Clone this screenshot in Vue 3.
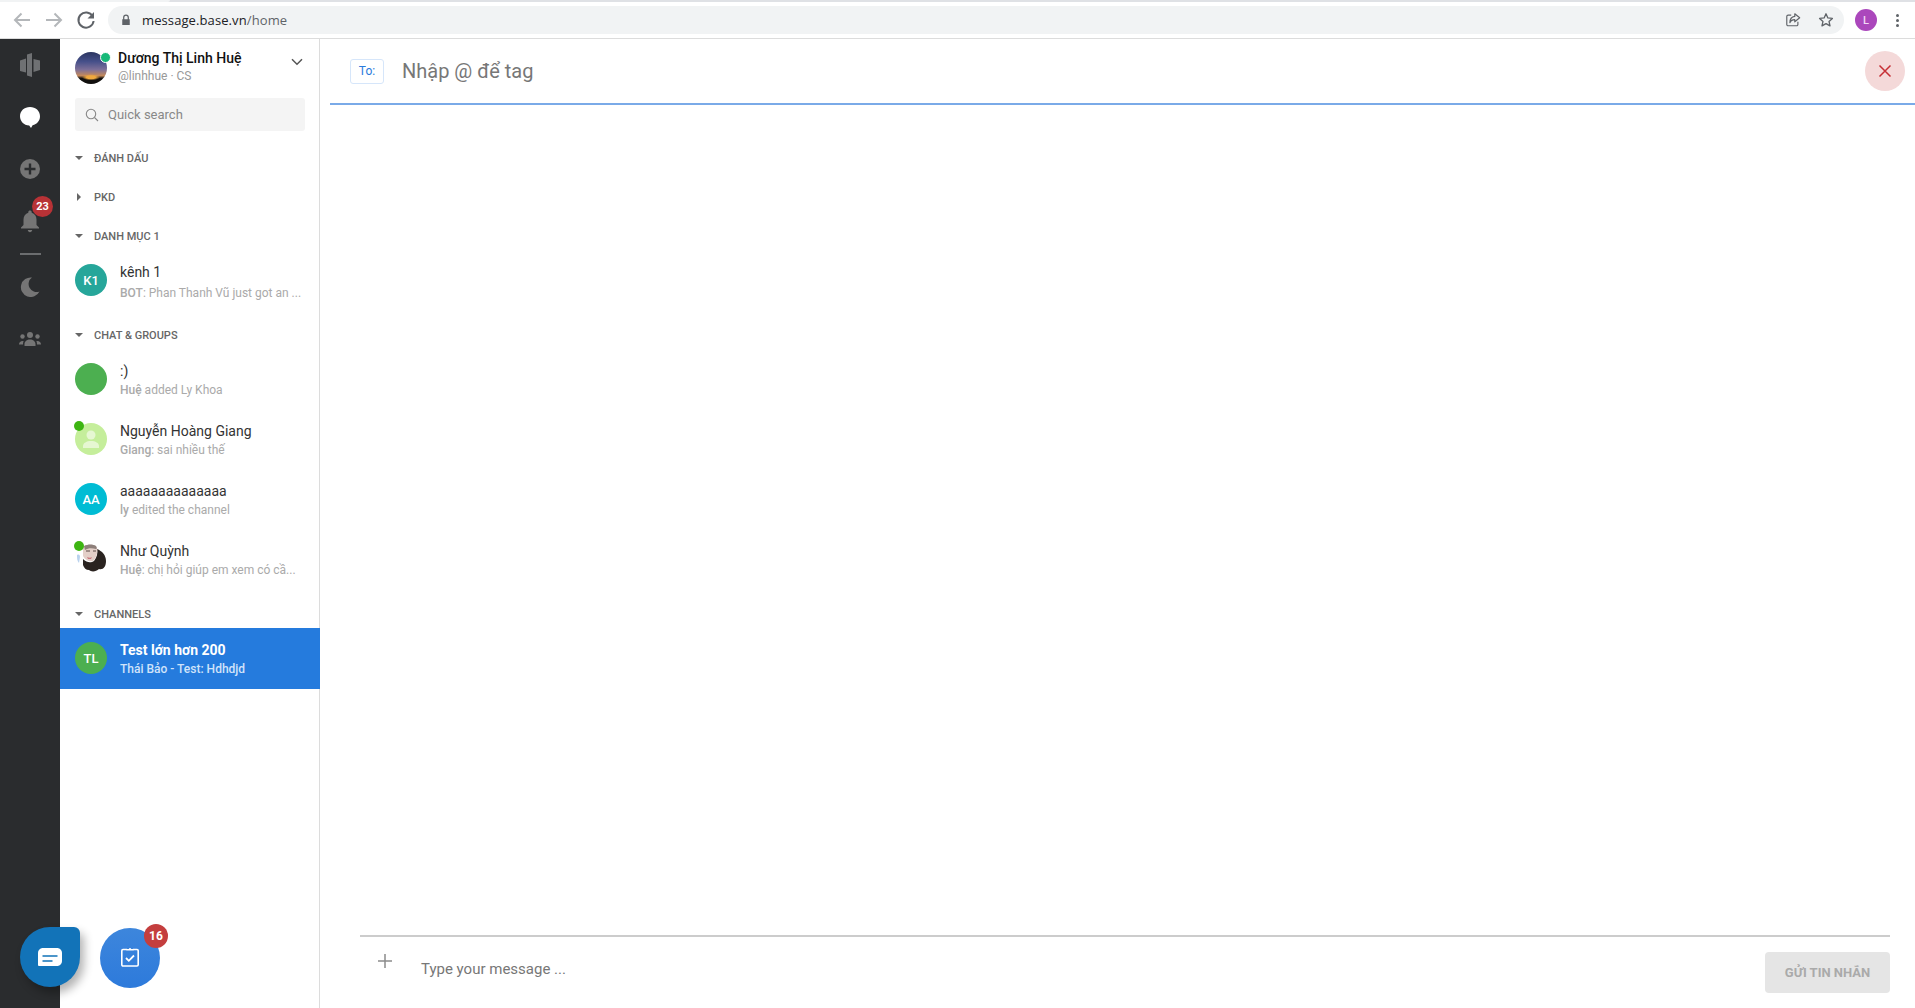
<script setup>
const sections = [
  { title: 'ĐÁNH DẤU', open: true, rows: [] },
  { title: 'PKD', open: false, rows: [] },
  { title: 'DANH MỤC 1', open: true, rows: [
    { name: 'kênh 1', from: 'BOT', text: ': Phan Thanh Vũ just got an ...', initials: 'K1', color: '#26a69a', loose: true },
  ] },
  { title: 'CHAT & GROUPS', open: true, rows: [
    { name: ':)', from: 'Huệ', text: ' added Ly Khoa', initials: '', color: '#4caf50' },
    { name: 'Nguyễn Hoàng Giang', from: 'Giang', text: ': sai nhiều thế', kind: 'person', color: '#c5ee9b', online: true },
    { name: 'aaaaaaaaaaaaaa', from: 'ly', text: ' edited the channel', initials: 'AA', color: '#00bcd4' },
    { name: 'Như Quỳnh', from: 'Huệ', text: ': chị hỏi giúp em xem có cầ...', kind: 'photo', color: '#fff', online: true },
  ] },
  { title: 'CHANNELS', open: true, rows: [
    { name: 'Test lớn hơn 200', from: 'Thái Bảo - Test', text: ': Hdhdjd', initials: 'TL', color: '#4caf50', active: true },
  ] },
]
</script>

<template>
  <div class="page">
    <header class="browser">
      <div class="tabstrip"><span class="tabrest"></span></div>
      <div class="toolbar">
        <svg class="nav" viewBox="0 0 24 24"><path d="M20 12H5M11.500 5.500 5 12l6.500 6.500" fill="none" stroke="#b4b7ba" stroke-width="2"/></svg>
        <svg class="nav" viewBox="0 0 24 24"><path d="M4 12h15M12.500 5.500 19 12l-6.500 6.500" fill="none" stroke="#b4b7ba" stroke-width="2"/></svg>
        <svg class="nav" viewBox="0 0 24 24"><path d="M18.600 8.200A7.600 7.600 0 1 0 19.600 13" fill="none" stroke="#5f6368" stroke-width="2"/><path d="M20 4v6.500h-6.500z" fill="#5f6368"/></svg>
        <div class="omnibox">
          <svg class="lock" viewBox="0 0 12 14"><path d="M2.500 6V4a3.500 3.500 0 0 1 7 0v2h1v7h-9V6zM4 6h4V4a2 2 0 0 0-4 0z" fill="#5f6368"/></svg>
          <span class="url"><b>message.base.vn</b>/home</span>
          <span class="grow"></span>
          <svg class="omni-icon" viewBox="0 0 18 18"><path d="M7 3.500H3.500a1.500 1.500 0 0 0-1.500 1.500v9a1.500 1.500 0 0 0 1.500 1.500h9.500a1.500 1.500 0 0 0 1.500-1.500v-3" fill="none" stroke="#5f6368" stroke-width="1.300"/><path d="M11 2l5.500 4.500L11 11V8.500C8.500 8.500 6.500 9.500 5.500 12c0-4 2-6.500 5.500-7z" fill="none" stroke="#5f6368" stroke-width="1.300" stroke-linejoin="round"/></svg>
          <svg class="omni-icon star" viewBox="0 0 18 18"><path d="M9 2l2.100 4.700 5.100.5-3.800 3.400 1.100 5L9 13l-4.500 2.600 1.100-5L1.800 7.200l5.100-.5z" fill="none" stroke="#5f6368" stroke-width="1.500" stroke-linejoin="round"/></svg>
        </div>
        <span class="profile">L</span>
        <span class="kebab"><i></i><i></i><i></i></span>
      </div>
    </header>

    <div class="shell">
      <nav class="rail">
        <div class="rail-item">
          <svg width="20" height="24" viewBox="0 0 20 24"><path d="M0 7.500L6 5.500V19.500L0 18zM7 1.500L12 0V24L7 22.500zM13.500 6L20 7.500V17L13.500 19z" fill="#6f7173"/></svg>
        </div>
        <div class="rail-item">
          <svg width="24" height="24" viewBox="0 0 24 24"><path d="M12 2c5.700 0 10 3.900 10 9.200 0 4.600-3 8-7.400 9l-1.600 2.800-1.800-2.600C5.800 20.200 2 16.300 2 11.200 2 5.900 6.300 2 12 2z" fill="#fff"/></svg>
        </div>
        <div class="rail-item">
          <svg width="22" height="22" viewBox="0 0 22 22"><circle cx="11" cy="11" r="10" fill="#757575"/><path d="M11 5.500v11M5.500 11h11" stroke="#2a2c2e" stroke-width="2.400"/></svg>
        </div>
        <div class="rail-item bell">
          <svg width="20" height="24" viewBox="0 0 20 24"><path d="M10 1.500c1 0 1.700.7 1.700 1.700v.6c3 .8 4.800 3.400 4.800 6.700v5.500l2.500 2.500v.9H1v-.9l2.500-2.500v-5.500c0-3.300 1.800-5.900 4.800-6.700v-.6c0-1 .7-1.700 1.700-1.700zM7.800 21h4.400c0 1.200-1 2.200-2.200 2.200S7.800 22.200 7.800 21z" fill="#757575"/></svg>
          <span class="badge rail-badge">23</span>
        </div>
        <div class="rail-divider"></div>
        <div class="rail-item">
          <svg width="20" height="20" viewBox="0 0 20 20"><path d="M12 .5A9.800 9.800 0 1 0 19.500 14.500 8 8 0 0 1 12 .5z" fill="#757575"/></svg>
        </div>
        <div class="rail-item">
          <svg width="22" height="14" viewBox="0 0 22 14"><circle cx="11" cy="3" r="3" fill="#757575"/><circle cx="3.500" cy="4.500" r="2.200" fill="#757575"/><circle cx="18.500" cy="4.500" r="2.200" fill="#757575"/><path d="M5.500 14v-2c0-2.700 2.500-4.500 5.500-4.500s5.500 1.800 5.500 4.500v2zM0 12.500c0-2 1.500-3.500 3.800-3.500.5 0 .7 0 .8.100-.4.900-.6 2-.6 3.400zM22 12.500c0-2-1.500-3.500-3.800-3.500-.5 0-.7 0-.8.100.4.900.6 2 .6 3.400z" fill="#757575"/></svg>
        </div>
      </nav>

      <aside class="sidebar">
        <div class="me">
          <div class="me-avatar">
            <span class="sky"></span>
            <span class="dot me-dot"></span>
          </div>
          <div class="me-text">
            <div class="me-name">Dương Thị Linh Huệ</div>
            <div class="me-sub">@linhhue · CS</div>
          </div>
          <svg class="chev" width="12" height="8" viewBox="0 0 12 8"><path d="M1 1.200l5 5 5-5" fill="none" stroke="#555" stroke-width="1.500"/></svg>
        </div>
        <div class="search">
          <svg width="14" height="14" viewBox="0 0 14 14"><circle cx="6" cy="6" r="4.700" fill="none" stroke="#888" stroke-width="1.100"/><path d="M9.500 9.500L13 13" stroke="#888" stroke-width="1.100"/></svg>
          <span>Quick search</span>
        </div>

        <div class="sections">
          <section v-for="s in sections" :key="s.title" class="section">
            <div class="section-head">
              <span class="caret-box"><span :class="s.open ? 'caret-down' : 'caret-right'"></span></span>
              <span>{{ s.title }}</span>
            </div>
            <div v-for="r in s.rows" :key="r.name" class="row" :class="{ active: r.active, loose: r.loose }">
              <div class="avatar" :style="{ background: r.color }">
                <template v-if="r.initials">{{ r.initials }}</template>
                <svg v-else-if="r.kind === 'person'" width="20" height="18" viewBox="0 0 20 18"><circle cx="10" cy="5" r="4.500" fill="#e6f7d2"/><path d="M2 18v-2c0-3 3.600-5 8-5s8 2 8 5v2z" fill="#e6f7d2"/></svg>
                <svg v-else-if="r.kind === 'photo'" class="photo" viewBox="0 0 32 32">
                  <path d="M8 16c4 4 8 4 11 2 3-4 4-8 3-12 5 2 9 6 9 12 0 6-3 9-7 8-3 3-8 3-10 1-3 0-5-2-6-5z" fill="#2a2320"/>
                  <path d="M8 4c4-3 11-3 14 1 1 5-1 10-4 13-4 1-8-1-10-5z" fill="#e3cfc8"/>
                  <path d="M9 3c4-2 9-2 12 0 1 1 1 3 0 3-4-1-8-1-11 1z" fill="#8d7f7a"/>
                  <path d="M12 14c2 1 4 1 5 0l-1 2h-3z" fill="#c9777e"/>
                  <path d="M11 8h4M18 8h3" stroke="#5a4a46" stroke-width="1"/>
                  <path d="M2 12c2-1 3 0 3 2l-1 6c-2-2-2-5-2-8z" fill="#b9d2ee"/>
                </svg>
                <span v-if="r.online" class="dot row-dot"></span>
              </div>
              <div class="row-text">
                <div class="row-name">{{ r.name }}</div>
                <div class="row-sub"><b>{{ r.from }}</b>{{ r.text }}</div>
              </div>
            </div>
          </section>
        </div>
      </aside>

      <main class="main">
        <div class="to-bar">
          <span class="to">To:</span>
          <span class="to-input">Nhập @ để tag</span>
          <span class="grow"></span>
          <button class="close">
            <svg width="14" height="14" viewBox="0 0 14 14"><path d="M1.500 1.500l11 11M12.500 1.500l-11 11" stroke="#c62f35" stroke-width="1.500"/></svg>
          </button>
        </div>
        <div class="messages"></div>
        <div class="composer">
          <svg class="plus" width="16" height="16" viewBox="0 0 16 16"><path d="M8 1v14M1 8h14" stroke="#8c8c8c" stroke-width="1.500"/></svg>
          <span class="type">Type your message ...</span>
          <span class="grow"></span>
          <button class="send">GỬI TIN NHẮN</button>
        </div>
      </main>

      <div class="fab drop">
        <svg width="24" height="18" viewBox="0 0 24 18"><path d="M5 0h14c2.800 0 5 2.200 5 5v8c0 2.800-2.200 5-5 5H1a1 1 0 0 1-1-1V5c0-2.800 2.200-5 5-5z" fill="#fff"/><path d="M4.500 8h15M4.500 13h10" stroke="#1273b8" stroke-width="1.500"/></svg>
      </div>
      <div class="fab task">
        <svg class="task-icon" width="18" height="20" viewBox="0 0 18 20"><path d="M6 2.500H2A1.200 1.200 0 0 0 .8 3.700v14.100A1.200 1.200 0 0 0 2 19h14a1.200 1.200 0 0 0 1.200-1.200V3.700A1.200 1.200 0 0 0 16 2.500h-4" fill="none" stroke="#fff" stroke-width="1.600"/><path d="M5.500 3.500V2h2.500a1 1 0 0 1 2 0h2.500v1.500z" fill="#fff"/><path d="M5 11l2.800 2.800L13 8.500" fill="none" stroke="#fff" stroke-width="1.800"/></svg>
        <span class="badge task-badge">16</span>
      </div>
    </div>
  </div>
</template>

<style>
html, body { margin: 0; height: 100%; overflow: hidden; background: #fff; }
</style>

<style scoped>
.page { display: flex; flex-direction: column; height: 1008px; width: 1915px; font-family: Roboto, "Noto Sans", sans-serif; color: #333; overflow: hidden; }
.grow { flex: 1; }

.browser { flex: none; height: 39px; box-sizing: border-box; border-bottom: 1px solid #dcdcdc; background: #fff; }
.tabstrip { height: 2px; background: #dfe1e5; }
.tabrest { display: block; width: 170px; height: 2px; background: #f1f3f4; border-radius: 0 0 4px 0; }
.toolbar { display: flex; align-items: center; height: 36px; padding: 0 0 0 10px; }
.nav { width: 24px; height: 24px; margin-right: 8px; }
.omnibox { display: flex; align-items: center; width: 1736px; height: 28px; margin-left: 2px; border-radius: 14px; background: #f1f3f4; }
.lock { width: 10px; height: 12px; margin-left: 13px; }
.url { margin-left: 11px; font: 13px "Open Sans", sans-serif; color: #5f6368; letter-spacing: .1px; }
.url b { font-weight: 400; color: #202124; }
.omni-icon { width: 16px; height: 16px; }
.star { margin-left: 17px; margin-right: 10px; }
.profile { display: flex; align-items: center; justify-content: center; width: 22px; height: 22px; margin-left: 11px; border-radius: 50%; background: #ab47bc; color: #f3d9f7; font-size: 11px; font-weight: 500; }
.kebab { display: flex; flex-direction: column; gap: 2px; margin-left: 19px; }
.kebab i { display: block; width: 3px; height: 3px; border-radius: 50%; background: #5f6368; }

.shell { position: relative; flex: 1; display: flex; min-height: 0; }

.rail { flex: none; width: 60px; background: #2a2c2e; }
.rail-item { position: relative; display: flex; align-items: center; justify-content: center; height: 52px; }
.rail-divider { width: 21px; height: 2px; margin: 6px auto 6px; background: #6b6d6f; }
.badge { display: flex; align-items: center; justify-content: center; border-radius: 50%; background: #c43e3e; color: #fff; font-weight: 700; }
.rail-badge { position: absolute; left: 32px; top: 1px; width: 21px; height: 21px; background: #b83236; font-size: 11px; }

.sidebar { flex: none; width: 259px; box-sizing: content-box; border-right: 1px solid #dcdcdc; background: #fff; }
.me { display: flex; align-items: flex-start; height: 58px; padding: 13px 0 0 15px; box-sizing: border-box; }
.me-avatar { position: relative; width: 32px; height: 32px; flex: none; }
.sky { display: block; width: 32px; height: 32px; border-radius: 50%; background: radial-gradient(ellipse 9px 3px at 50% 79%, #f0a93e 0 50%, transparent 100%), linear-gradient(to bottom, #2b3560 0%, #46508a 30%, #7d6f98 55%, #c58a5a 74%, #15120f 82%, #0f0e0d 100%); }
.dot { position: absolute; border-radius: 50%; }
.me-dot { right: -4px; top: 0; width: 9px; height: 9px; background: #17b978; border: 1px solid #fff; }
.me-text { margin-left: 11px; width: 160px; }
.me-name { margin-top: -4px; font-size: 14px; line-height: 20px; font-weight: 500; color: #111; white-space: nowrap; }
.me-sub { font-size: 12px; line-height: 17px; color: #999; }
.chev { margin-top: 6px; margin-left: 13px; }
.search { display: flex; align-items: center; gap: 9px; width: 230px; height: 33px; margin: 1px 0 0 15px; padding-left: 10px; box-sizing: border-box; border-radius: 3px; background: #f4f4f4; color: #888; font-size: 13px; }

.sections { padding-top: 2px; }
.section { margin-top: 11px; }
.section-head { display: flex; align-items: center; height: 28px; padding-left: 15px; font-size: 11px; font-weight: 500; color: #666; white-space: nowrap; }
.caret-box { display: flex; align-items: center; width: 19px; }
.caret-down { width: 0; height: 0; border-left: 4px solid transparent; border-right: 4px solid transparent; border-top: 4px solid #666; }
.caret-right { width: 0; height: 0; margin-left: 2px; border-top: 4px solid transparent; border-bottom: 4px solid transparent; border-left: 4px solid #666; }

.row { display: flex; align-items: flex-start; height: 60px; padding: 12px 0 0 15px; box-sizing: border-box; }
.row.active { height: 61px; width: 260px; background: #257bdd; }
.avatar { position: relative; display: flex; align-items: center; justify-content: center; flex: none; width: 32px; height: 32px; margin-top: 2px; border-radius: 50%; color: #fff; font-size: 13px; font-weight: 500; }
.photo { width: 32px; height: 32px; }
.row-dot { left: -1px; top: -2px; width: 10px; height: 10px; background: #3db512; }
.row-text { margin-left: 13px; min-width: 0; }
.row-name { font-size: 14px; line-height: 20px; color: #333; white-space: nowrap; }
.row-sub { margin-top: -1px; font-size: 12px; line-height: 20px; color: #aaa; white-space: nowrap; }
.loose .row-sub { margin-top: 1px; }
.row-sub b { font-weight: 500; }
.active .row-name { color: #fff; font-weight: 700; }
.active .row-sub { color: #d0e3fa; font-weight: 500; }

.main { flex: 1; display: flex; flex-direction: column; min-width: 0; padding-left: 10px; }
.to-bar { display: flex; align-items: center; flex: none; height: 64px; box-sizing: content-box; border-bottom: 2px solid #7aaae8; padding: 0 0 0 20px; }
.to { display: flex; align-items: center; justify-content: center; width: 34px; height: 25px; box-sizing: border-box; border: 1px solid #d6e6fa; border-radius: 3px; color: #2b7bdc; font-size: 12px; }
.to-input { margin-left: 18px; font-size: 20px; color: #777; }
.close { display: flex; align-items: center; justify-content: center; width: 40px; height: 40px; margin-right: 10px; padding: 0; border: 0; border-radius: 50%; background: #f4d9d9; }
.messages { flex: 1; }
.composer { display: flex; align-items: flex-start; flex: none; height: 71px; box-sizing: content-box; margin: 0 25px 0 30px; border-top: 2px solid #ccc; }
.plus { margin: 16px 0 0 17px; }
.type { margin: 23px 0 0 28px; font-size: 15px; line-height: 18px; color: #777; }
.send { width: 125px; height: 41px; margin-top: 15px; padding: 0; border: 0; border-radius: 4px; background: #e5e5e5; color: #aaa; font: 700 13px Roboto, sans-serif; }

.fab { position: absolute; display: flex; align-items: center; justify-content: center; width: 60px; height: 60px; border-radius: 50%; }
.drop { left: 20px; top: 888px; background: #1273b8; border-top-right-radius: 6px; box-shadow: 4px 6px 10px rgba(0,0,0,.3); }
.task { left: 100px; top: 889px; background: linear-gradient(#3d86dc, #2d7adb); }
.task-icon { margin-top: -2px; }
.task-badge { position: absolute; right: -8px; top: -4px; width: 24px; height: 24px; font-size: 12px; }
</style>
